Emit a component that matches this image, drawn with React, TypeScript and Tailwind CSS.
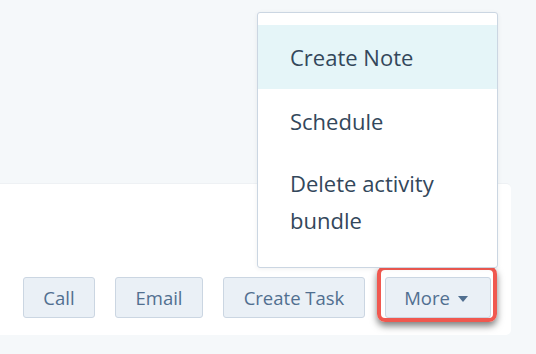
import { ReactNode } from "react";

const font = { fontFamily: "'Open Sans', 'Liberation Sans', sans-serif" };

function ActionButton({ children, className = "" }: { children: ReactNode; className?: string }) {
    return (
        <button
            className={`h-[41px] rounded-[3px] border border-[#cbd6e2] bg-[#eaf0f6] text-[18.5px] text-[#516f90] flex items-center justify-center ${className}`}
        >
            {children}
        </button>
    );
}

export default function App() {
    return (
        <div className="relative w-[536px] h-[354px] overflow-hidden bg-[#f5f8fa]" style={font}>
            <div className="pt-[183px] pr-[25px]">
                {/* Activity card */}
                <div className="h-[152px] bg-white rounded-r-[5px] border-t border-[#eef1f4] flex items-end pl-[23px] pb-[17px]">
                    <div className="flex gap-5">
                        <ActionButton className="w-[72px]">Call</ActionButton>
                        <ActionButton className="w-[88px]">Email</ActionButton>
                        <ActionButton className="w-[142px]">Create Task</ActionButton>
                        <ActionButton className="w-[106px] gap-2 pr-[4px]">
                            More
                            <svg width="10" height="6" viewBox="0 0 10 6" className="mt-[2px]">
                                <path d="M0 0h10L5 6z" fill="#516f90" />
                            </svg>
                        </ActionButton>
                    </div>
                </div>
            </div>

            {/* Highlight around More */}
            <div className="absolute left-[377px] top-[266px] w-[120px] h-[56px] rounded-[8px] border-[4px] border-[#f0584f] shadow-[0_4px_7px_rgba(0,0,0,0.5)]" />

            {/* Dropdown menu */}
            <div className="absolute left-[257px] top-[12px] w-[241px] h-[256px] bg-white border border-[#cbd6e2] rounded-[3px] shadow-[0_1px_4px_rgba(45,62,80,0.08)] pt-[12px] text-[22px] text-[#33475b]">
                <div className="h-[64px] bg-[#e5f5f8] flex items-center px-[32px]">Create Note</div>
                <div className="h-[64px] flex items-center px-[32px]">Schedule</div>
                <div className="px-[32px] pt-[12px] leading-[37px]">
                    Delete activity
                    <br />
                    bundle
                </div>
            </div>
        </div>
    );
}
